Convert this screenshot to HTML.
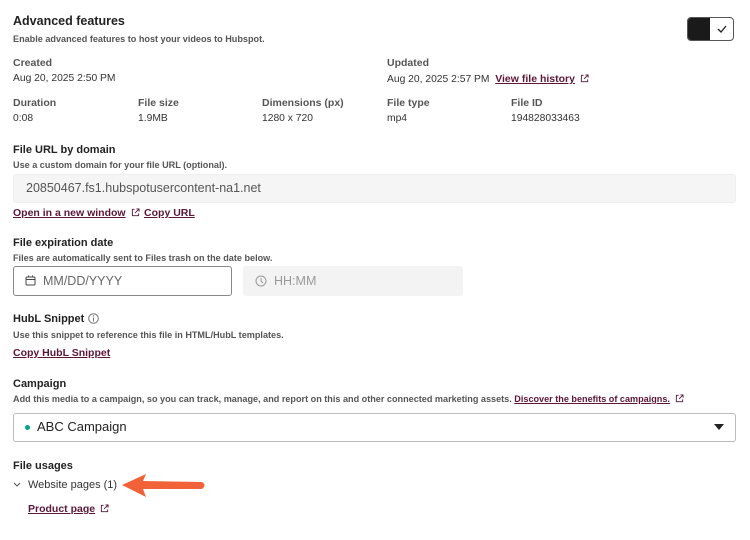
<!DOCTYPE html>
<html><head><meta charset="utf-8"><style>
body{margin:0;width:750px;height:540px;background:#fff;font-family:"Liberation Sans",sans-serif;color:#33475b;position:relative;overflow:hidden}
.a{position:absolute;white-space:nowrap;line-height:14px}
.h{font-weight:bold;font-size:11px;color:#222}
.l{font-weight:bold;font-size:10.5px;color:#555}
.v{font-size:10.3px;color:#333}
.s{font-weight:bold;font-size:9.1px;color:#555}
.k{font-weight:bold;font-size:10.5px;color:#5b1638;text-decoration:underline}
.box{position:absolute;box-sizing:border-box;border-radius:3px}
.ext{display:inline-block;width:9px;height:9px;margin-left:5px;vertical-align:-1px}
</style></head><body>
<svg width="0" height="0" style="position:absolute"><defs><symbol id="e" viewBox="0 0 10 10"><path d="M4 1.5H1.5v7h7V6M6 1h3v3M9 1L4.5 5.5" fill="none" stroke="#5b1638" stroke-width="1"/></symbol></defs></svg>
<div class="a h" style="left:13px;top:14px;font-size:12.5px">Advanced features</div>
<div class="a s" style="left:13px;top:32px">Enable advanced features to host your videos to Hubspot.</div>
<div class="box" style="left:687px;top:17px;width:47px;height:24px;border:1px solid #555;background:#fff;border-radius:4px;overflow:hidden">
<div style="position:absolute;left:0;top:0;width:22px;height:24px;background:#1a1a1a"></div>
<svg style="position:absolute;left:28px;top:6px" width="12" height="10"><path d="M2 5l3 3 5-6" stroke="#222" stroke-width="1.3" fill="none"/></svg></div>

<div class="a l" style="left:13px;top:56px">Created</div>
<div class="a v" style="left:13px;top:72px">Aug 20, 2025 2:50 PM</div>
<div class="a l" style="left:387px;top:56px">Updated</div>
<div class="a v" style="left:387px;top:72px">Aug 20, 2025 2:57 PM &nbsp;<span class="k">View file history</span><svg class="ext"><use href="#e"/></svg></div>

<div class="a l" style="left:13px;top:96px">Duration</div><div class="a v" style="left:13px;top:112px">0:08</div>
<div class="a l" style="left:138px;top:96px">File size</div><div class="a v" style="left:138px;top:112px">1.9MB</div>
<div class="a l" style="left:262px;top:96px">Dimensions (px)</div><div class="a v" style="left:262px;top:112px">1280 x 720</div>
<div class="a l" style="left:387px;top:96px">File type</div><div class="a v" style="left:387px;top:112px">mp4</div>
<div class="a l" style="left:511px;top:96px">File ID</div><div class="a v" style="left:511px;top:112px">194828033463</div>

<div class="a h" style="left:13px;top:143px">File URL by domain</div>
<div class="a s" style="left:13px;top:158px">Use a custom domain for your file URL (optional).</div>
<div class="box" style="left:13px;top:174px;width:723px;height:29px;background:#f5f5f5;border:1px solid #eee"></div>
<div class="a" style="left:26px;top:181px;font-size:12.5px;color:#555">20850467.fs1.hubspotusercontent-na1.net</div>
<div class="a" style="left:13px;top:205px"><span class="k">Open in a new window</span><svg class="ext"><use href="#e"/></svg> <span class="k">Copy URL</span></div>

<div class="a h" style="left:13px;top:236px">File expiration date</div>
<div class="a s" style="left:13px;top:251px">Files are automatically sent to Files trash on the date below.</div>
<div class="box" style="left:13px;top:266px;width:219px;height:30px;border:1px solid #888"></div>
<svg class="a" style="left:25px;top:275px" width="11" height="11"><rect x="1" y="2" width="9" height="8" rx="1" fill="none" stroke="#444"/><line x1="1" y1="4.5" x2="10" y2="4.5" stroke="#444"/><line x1="3.5" y1="0.5" x2="3.5" y2="2.5" stroke="#444"/><line x1="7.5" y1="0.5" x2="7.5" y2="2.5" stroke="#444"/></svg>
<div class="a" style="left:43px;top:274px;font-size:12.5px;color:#666">MM/DD/YYYY</div>
<div class="box" style="left:243px;top:266px;width:220px;height:30px;background:#f3f3f3"></div>
<svg class="a" style="left:255px;top:275px" width="12" height="12"><circle cx="6" cy="6" r="5" fill="none" stroke="#999"/><path d="M6 3v3l2 2" stroke="#999" fill="none"/></svg>
<div class="a" style="left:274px;top:274px;font-size:12.5px;color:#999">HH:MM</div>

<div class="a h" style="left:13px;top:312px">HubL Snippet</div>
<svg class="a" style="left:88px;top:313px" width="11" height="11"><circle cx="5.5" cy="5.5" r="4.8" fill="none" stroke="#777"/><line x1="5.5" y1="4.5" x2="5.5" y2="8.5" stroke="#777"/><circle cx="5.5" cy="3" r=".7" fill="#777"/></svg>
<div class="a s" style="left:13px;top:328px">Use this snippet to reference this file in HTML/HubL templates.</div>
<div class="a k" style="left:13px;top:346px">Copy HubL Snippet</div>

<div class="a h" style="left:13px;top:377px">Campaign</div>
<div class="a s" style="left:13px;top:392px">Add this media to a campaign, so you can track, manage, and report on this and other connected marketing assets. <span class="k" style="font-size:9.1px">Discover the benefits of campaigns.</span><svg class="ext"><use href="#e"/></svg></div>
<div class="box" style="left:13px;top:413px;width:723px;height:29px;border:1px solid #bbb"></div>
<div class="a" style="left:25px;top:425px;width:5px;height:5px;border-radius:50%;background:#00a38d"></div>
<div class="a" style="left:37px;top:420px;font-size:13px;color:#222">ABC Campaign</div>
<svg class="a" style="left:714px;top:424px" width="10" height="6"><path d="M0 0h10L5 6z" fill="#222"/></svg>

<div class="a h" style="left:13px;top:459px">File usages</div>
<svg class="a" style="left:13px;top:482px" width="8" height="6"><path d="M1 1l3 3 3-3" stroke="#555" fill="none"/></svg>
<div class="a" style="left:28px;top:478px;font-size:11px;color:#333">Website pages (1)</div>
<svg class="a" style="left:118px;top:471px" width="90" height="30"><path d="M4 14 L28 3 L25 10 L84 11 Q89 14 84 18 L25 18 L28 26 Z" fill="#f26239"/></svg>
<div class="a" style="left:28px;top:501px"><span class="k">Product page</span><svg class="ext"><use href="#e"/></svg></div>
</body></html>
